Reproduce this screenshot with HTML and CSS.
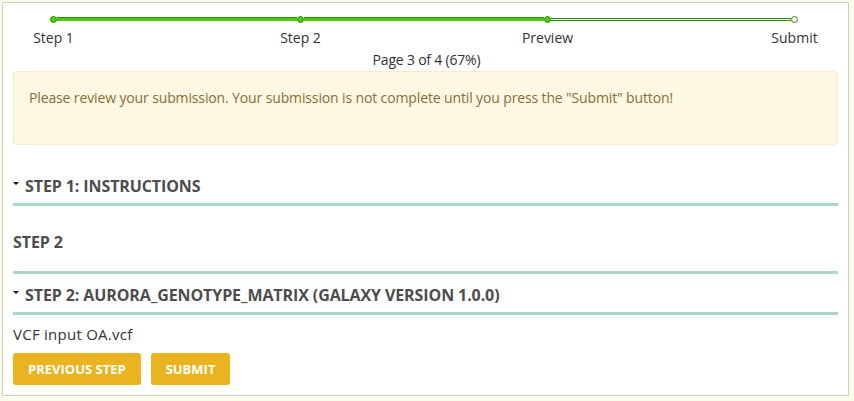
FILE: index.html
```html
<!DOCTYPE html>
<html>
<head>
<meta charset="utf-8">
<link rel="stylesheet" href="styles.css">
</head>
<body>
<div class="panel">
  <div class="wizard">
    <div class="step"><span class="dot done"></span><span class="step-label">Step 1</span></div>
    <div class="seg done"></div>
    <div class="step"><span class="dot done"></span><span class="step-label">Step 2</span></div>
    <div class="seg done"></div>
    <div class="step"><span class="dot done"></span><span class="step-label">Preview</span></div>
    <div class="seg"></div>
    <div class="step"><span class="dot"></span><span class="step-label">Submit</span></div>
  </div>
  <div class="page-info">Page 3 of 4 (67%)</div>
  <div class="alert">Please review your submission. Your submission is not complete until you press the "Submit" button!</div>
  <h4 class="section first"><span class="caret"></span>STEP 1: INSTRUCTIONS</h4>
  <h4 class="section plain">STEP 2</h4>
  <h4 class="section third"><span class="caret"></span>STEP 2: AURORA_GENOTYPE_MATRIX (GALAXY VERSION 1.0.0)</h4>
  <div class="field">VCF input OA.vcf</div>
  <div class="actions">
    <button class="btn">PREVIOUS STEP</button>
    <button class="btn">SUBMIT</button>
  </div>
</div>
</body>
</html>
```

FILE: styles.css
```css
html, body {
  margin: 0;
  padding: 0;
  background: #fbfbe9;
}
body {
  font-family: "Open Sans", "Liberation Sans", sans-serif;
  color: #333;
  font-size: 14px;
}
.panel {
  margin: 2px 5px 0 2px;
  border: 1px solid #cfcfc8;
  background: #fff;
  padding: 10px;
  width: 825px;
  box-sizing: content-box;
}
.wizard {
  display: flex;
  align-items: flex-start;
  margin: 0 40px 0 37px;
}
.step {
  width: 7px;
  display: flex;
  flex-direction: column;
  align-items: center;
  flex: none;
}
.dot {
  width: 7px;
  height: 7px;
  box-sizing: border-box;
  border-radius: 50%;
  border: 1px solid #2a8c00;
  background: #fff;
  margin-top: 3px;
}
.dot.done {
  background: #4ccc0a;
}
.step-label {
  white-space: nowrap;
  margin-top: 7px;
  line-height: 16px;
  font-size: 14px;
  color: #333;
}
.seg {
  flex: 1;
  height: 3px;
  box-sizing: border-box;
  margin-top: 5px;
  border-top: 1px solid #2a8c00;
  border-bottom: 1px solid #2a8c00;
  background: #fff;
}
.seg.done {
  height: 4px;
  margin-top: 4px;
  border-bottom: none;
  background: #4ccc0a;
}
.page-info {
  text-align: center;
  line-height: 16px;
  margin-top: 6px;
  font-size: 14px;
  letter-spacing: -0.2px;
  padding-left: 2px;
}
.alert {
  margin-top: 3px;
  background: #fcf8e1;
  border: 1px solid #f8ecc6;
  border-radius: 4px;
  color: #8a6d3b;
  padding: 16px 15px 36px;
  line-height: 20px;
  font-size: 14px;
  letter-spacing: -0.13px;
}
.section {
  margin: 0;
  display: flex;
  align-items: center;
  font-size: 16px;
  letter-spacing: -0.1px;
  font-weight: bold;
  color: #4d4d4d;
  line-height: 20px;
  border-bottom: 3px solid #a8d8c9;
  padding-bottom: 7px;
}
.section.first {
  margin-top: 31px;
}
.section.plain {
  margin-top: 26px;
  padding-bottom: 19px;
}
.section.third {
  margin-top: 11px;
}
.caret {
  width: 0;
  height: 0;
  border-left: 3px solid transparent;
  border-right: 3px solid transparent;
  border-top: 3px solid #000;
  margin-right: 6px;
  margin-bottom: 6px;
}
.field {
  margin-top: 11px;
  line-height: 16px;
  font-size: 15px;
  letter-spacing: 0.25px;
  color: #333;
}
.actions {
  margin-top: 11px;
  display: flex;
  gap: 10px;
}
.btn {
  font-family: inherit;
  background: #e9b41f;
  color: #fff;
  border: none;
  border-radius: 3px;
  height: 32px;
  padding: 0 15px;
  font-weight: bold;
  font-size: 13px;
}
```
